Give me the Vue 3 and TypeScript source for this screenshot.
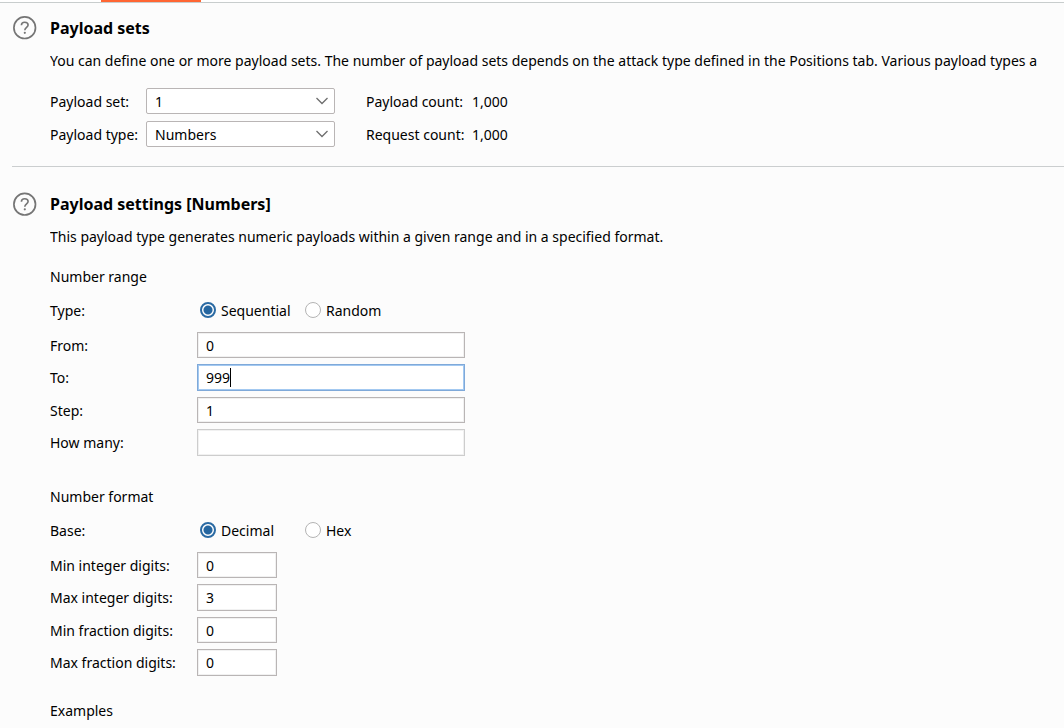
<script setup lang="ts">
import { onMounted, ref } from 'vue'

interface Field {
  id: string
  label: string
  value: string
  disabled?: boolean
}

const digitWidth = 8

const payloadSet = ref('1')
const payloadType = ref('Numbers')
const rangeType = ref('Sequential')
const base = ref('Decimal')
const focused = ref('')

const rangeFields = ref<Field[]>([
  { id: 'from', label: 'From:', value: '0' },
  { id: 'to', label: 'To:', value: '999' },
  { id: 'step', label: 'Step:', value: '1' },
  { id: 'how-many', label: 'How many:', value: '', disabled: true },
])

const formatFields = ref<Field[]>([
  { id: 'min-int', label: 'Min integer digits:', value: '0' },
  { id: 'max-int', label: 'Max integer digits:', value: '3' },
  { id: 'min-frac', label: 'Min fraction digits:', value: '0' },
  { id: 'max-frac', label: 'Max fraction digits:', value: '0' },
])

onMounted(() => {
  const el = document.getElementById('to') as HTMLInputElement | null
  focused.value = 'to'
  el?.focus()
})
</script>

<template>
  <main class="page">
    <div class="tab-strip"><span class="tab-active"></span></div>

    <section class="section">
      <button class="help" type="button" aria-label="Help on payload sets">
        <svg viewBox="0 0 24 24" width="24" height="24" fill="none" stroke="#757575">
          <circle cx="11.7" cy="11.7" r="10.8" stroke-width="1.7" />
          <path d="M8.4 9.2C8.4 7.3 9.8 6.2 11.7 6.2S15.1 7.3 15.1 9C15.1 11.3 11.8 11.4 11.8 14.2" stroke-width="1.6" />
          <circle cx="11.8" cy="16.8" r="1.1" fill="#757575" stroke="none" />
        </svg>
      </button>
      <div class="body">
        <h2>Payload sets</h2>
        <p class="desc">You can define one or more payload sets. The number of payload sets depends on the attack type defined in the Positions tab. Various payload types a</p>
        <div class="set-grid">
          <label class="cell" for="payload-set">Payload set:</label>
          <span class="combo">
            <select id="payload-set" v-model="payloadSet"><option>1</option></select>
            <svg class="chevron" viewBox="0 0 14 8" width="14" height="8" fill="none" stroke="#6e6e6e" stroke-width="1.3"><path d="M1.5 1l5.5 5.5L12.500 1" /></svg>
          </span>
          <span class="cell count-label">Payload count:</span><span class="cell">1,000</span>
          <label class="cell" for="payload-type">Payload type:</label>
          <span class="combo">
            <select id="payload-type" v-model="payloadType"><option>Numbers</option></select>
            <svg class="chevron" viewBox="0 0 14 8" width="14" height="8" fill="none" stroke="#6e6e6e" stroke-width="1.3"><path d="M1.5 1l5.5 5.5L12.500 1" /></svg>
          </span>
          <span class="cell count-label">Request count:</span><span class="cell">1,000</span>
        </div>
      </div>
    </section>

    <hr class="rule" />

    <section class="section second">
      <button class="help" type="button" aria-label="Help on payload settings">
        <svg viewBox="0 0 24 24" width="24" height="24" fill="none" stroke="#757575">
          <circle cx="11.7" cy="12.2" r="10.8" stroke-width="1.7" />
          <path d="M8.4 9.7C8.4 7.8 9.8 6.7 11.7 6.7S15.1 7.8 15.1 9.5C15.1 11.8 11.8 11.9 11.8 14.7" stroke-width="1.6" />
          <circle cx="11.8" cy="17.300" r="1.1" fill="#757575" stroke="none" />
        </svg>
      </button>
      <div class="body">
        <h2>Payload settings [Numbers]</h2>
        <p class="desc">This payload type generates numeric payloads within a given range and in a specified format.</p>

        <h3>Number range</h3>
        <div class="radio-row" role="radiogroup" aria-labelledby="type-label">
          <span id="type-label" class="name">Type:</span>
          <label v-for="o in ['Sequential', 'Random']" :key="o" class="radio">
            <input v-model="rangeType" type="radio" name="range-type" :value="o" />{{ o }}
          </label>
        </div>
        <div class="fields">
          <div v-for="f in rangeFields" :key="f.id" class="field">
            <label class="name" :for="f.id">{{ f.label }}</label>
            <span class="box">
              <input
                :id="f.id"
                v-model="f.value"
                class="text wide"
                type="text"
                :disabled="f.disabled"
                @focus="focused = f.id"
                @blur="focused = ''"
              />
              <span v-if="focused === f.id" class="caret" :style="{ left: 9 + f.value.length * digitWidth + 'px' }"></span>
            </span>
          </div>
        </div>

        <h3 class="later">Number format</h3>
        <div class="radio-row" role="radiogroup" aria-labelledby="base-label">
          <span id="base-label" class="name">Base:</span>
          <label v-for="o in ['Decimal', 'Hex']" :key="o" class="radio">
            <input v-model="base" type="radio" name="base" :value="o" />{{ o }}
          </label>
        </div>
        <div class="fields">
          <div v-for="f in formatFields" :key="f.id" class="field">
            <label class="name" :for="f.id">{{ f.label }}</label>
            <input :id="f.id" v-model="f.value" class="text" type="text" />
          </div>
        </div>

        <h3 class="examples">Examples</h3>
      </div>
    </section>
  </main>
</template>

<style>
body {
  background: #fcfcfc;
  overflow: hidden;
}
</style>

<style scoped>
.page {
  font: 14px/20px "Noto Sans", "Open Sans", sans-serif;
  color: #000;
}
.tab-strip {
  height: 2px;
  padding-left: 101px;
  background: #fff;
  border-bottom: 1px solid #c8cdcd;
}
.tab-active {
  display: block;
  width: 100px;
  height: 2px;
  background: #ff6633;
}
.section {
  display: flex;
  gap: 13px;
  padding: 13px 0 19px 13px;
}
.second {
  padding-top: 25px;
  padding-bottom: 0;
}
.help {
  flex: none;
  width: 24px;
  height: 24px;
  padding: 0;
  border: 0;
  background: none;
}
.help svg {
  display: block;
}
.body {
  flex: 1;
  min-width: 0;
}
h2 {
  margin: 0;
  font-size: 16px;
  line-height: 24px;
  font-weight: 700;
}
.desc {
  margin: 11px 0 17px;
  white-space: nowrap;
  overflow: hidden;
}
.set-grid {
  display: grid;
  grid-template-columns: 96px 189px 137px auto;
  justify-content: start;
  align-items: center;
  row-gap: 7px;
}
.cell {
  padding-top: 2px;
}
.count-label {
  padding-left: 31px;
}
.combo {
  position: relative;
  display: block;
}
select {
  display: block;
  width: 100%;
  height: 26px;
  padding: 2px 28px 0 8px;
  appearance: none;
  border: 1px solid #b9b5b5;
  border-radius: 2px;
  background: #fff;
  font: inherit;
  color: inherit;
}
.chevron {
  position: absolute;
  right: 6px;
  top: 9px;
  pointer-events: none;
}
.rule {
  height: 1px;
  margin: 0 0 0 12px;
  border: 0;
  background: #cbcecf;
}
h3 {
  margin: 0;
  font-size: 14px;
  font-weight: 400;
}
.second .desc {
  margin-bottom: 20px;
}
.radio-row {
  display: flex;
  align-items: center;
  margin: 14px 0 11px;
}
.name {
  flex: none;
  width: 147px;
}
.radio {
  display: flex;
  align-items: center;
  gap: 5px;
  width: 105px;
  padding-left: 3px;
  box-sizing: border-box;
}
.radio input {
  appearance: none;
  flex: none;
  box-sizing: border-box;
  width: 16px;
  height: 16px;
  margin: 0 0 2px;
  border: 1px solid #b4b4b4;
  border-radius: 50%;
  background: #fff;
}
.radio input:checked {
  border: 2px solid #2a6aa3;
  background: radial-gradient(circle, #2566a0 4px, #fff 5px);
}
.fields {
  display: grid;
  row-gap: 6px;
}
.field {
  display: flex;
  align-items: center;
}
.field .name {
  padding-top: 1px;
}
.box {
  position: relative;
  display: flex;
}
.text {
  box-sizing: border-box;
  width: 80px;
  height: 26px;
  padding: 0 8px;
  border: 1px solid #b9b5b5;
  border-radius: 0;
  background: #fff;
  box-shadow: inset 0 0 0 1px #f1f1f1;
  font: inherit;
  color: inherit;
  outline: none;
}
.field:nth-child(even) .text {
  height: 27px;
}
.wide {
  width: 268px;
  caret-color: transparent;
}
.caret {
  position: absolute;
  top: 4px;
  bottom: 4px;
  width: 1px;
  background: #000;
  pointer-events: none;
}
.text:focus {
  border-color: #7fa9d9;
  box-shadow: inset 0 0 0 1px #a3c9f1;
}
.text:disabled {
  border-color: #cdcdcd;
}
.later {
  margin-top: 31px;
}
.examples {
  margin-top: 25px;
}
</style>
